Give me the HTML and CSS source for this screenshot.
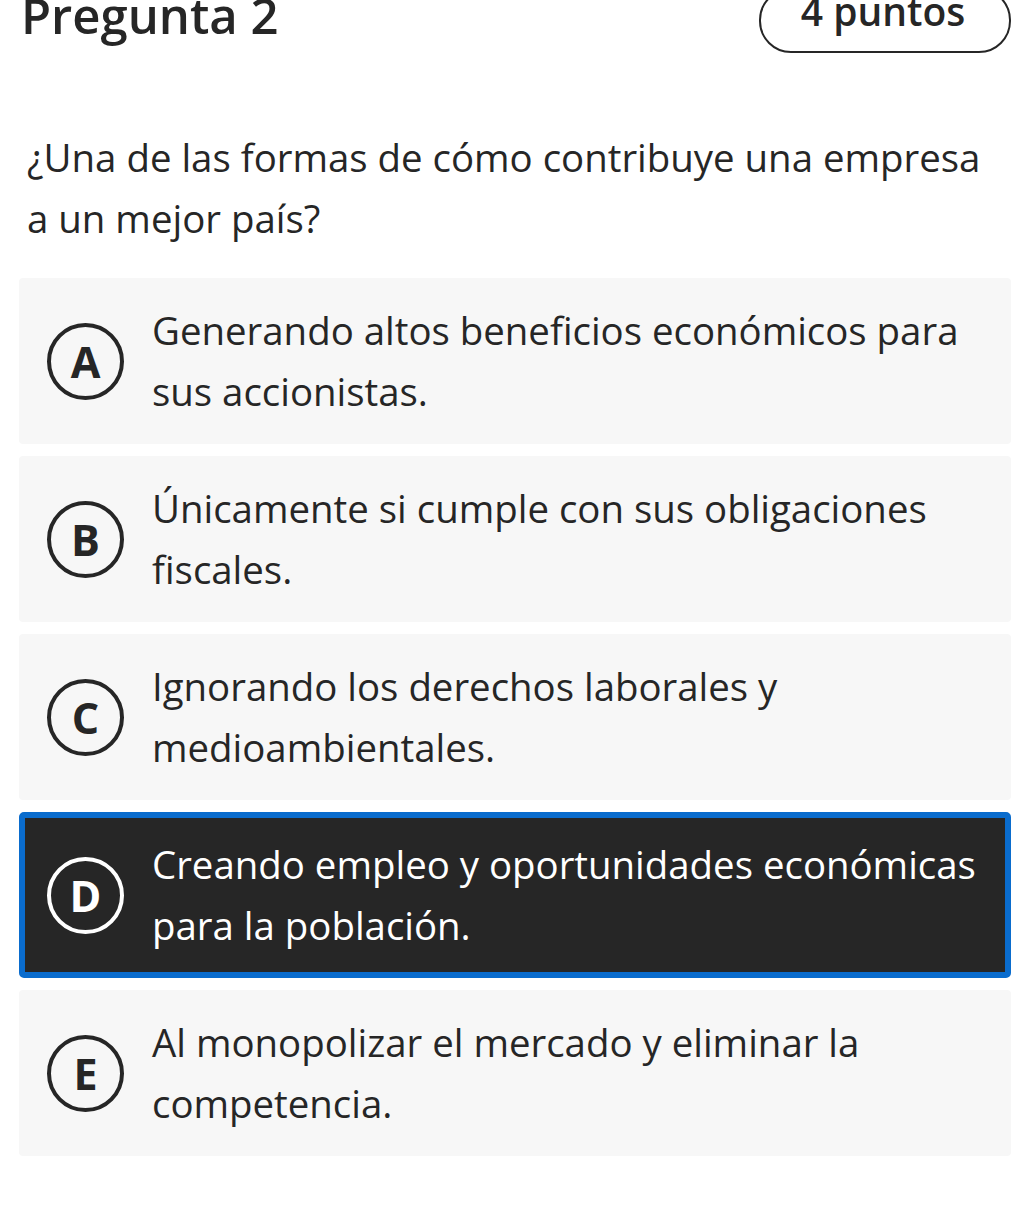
FILE: index.html
```html
<!DOCTYPE html>
<html lang="es">
<head>
<meta charset="utf-8">
<title>Pregunta 2</title>
<link rel="stylesheet" href="styles.css">
</head>
<body>
<main class="page">
  <header class="head">
    <h1 class="title">Pregunta 2</h1>
    <span class="points">4 puntos</span>
  </header>
  <p class="question">¿Una de las formas de cómo contribuye una empresa a un mejor país?</p>
  <ul class="options">
    <li class="option"><span class="badge">A</span><span class="text">Generando altos beneficios económicos para sus accionistas.</span></li>
    <li class="option"><span class="badge">B</span><span class="text">Únicamente si cumple con sus obligaciones fiscales.</span></li>
    <li class="option"><span class="badge">C</span><span class="text">Ignorando los derechos laborales y medioambientales.</span></li>
    <li class="option selected"><span class="badge">D</span><span class="text">Creando empleo y oportunidades económicas para la población.</span></li>
    <li class="option"><span class="badge">E</span><span class="text">Al monopolizar el mercado y eliminar la competencia.</span></li>
  </ul>
</main>
</body>
</html>
```

FILE: styles.css
```css
html, body {
  margin: 0;
  padding: 0;
  background: #ffffff;
}
body {
  font-family: "Open Sans", "Noto Sans", sans-serif;
  color: #262626;
}
.page {
  padding: 0 5px 0 19px;
}
.head {
  display: flex;
  justify-content: space-between;
  align-items: flex-start;
  margin-top: -12px;
}
.title {
  margin: -3px 0 0 0;
  padding-left: 2px;
  font-size: 49px;
  font-weight: 600;
  line-height: 60px;
}
.points {
  display: block;
  box-sizing: border-box;
  width: 252px;
  height: 65px;
  border: 2px solid #262626;
  border-radius: 32px;
  text-align: center;
  font-size: 39px;
  font-weight: 600;
  line-height: 42px;
  padding-right: 4px;
}
.question {
  margin: 74px 0 0 0;
  padding-left: 8px;
  font-size: 38.4px;
  line-height: 61px;
}
.options {
  list-style: none;
  margin: 29px 0 0 0;
  padding: 0;
  display: flex;
  flex-direction: column;
  gap: 12px;
}
.option {
  box-sizing: border-box;
  height: 166px;
  display: flex;
  align-items: center;
  background: #f7f7f7;
  border-radius: 4px;
  padding: 0 20px 0 28px;
}
.badge {
  flex: none;
  box-sizing: border-box;
  width: 77px;
  height: 77px;
  border: 4px solid #262626;
  border-radius: 50%;
  display: flex;
  align-items: center;
  justify-content: center;
  font-size: 43px;
  font-weight: 700;
  line-height: 1;
  margin-right: 28px;
}
.text {
  font-size: 38.4px;
  line-height: 61px;
}
.option.selected {
  background: #262626;
  color: #ffffff;
  border: 6px solid #0a6ccd;
  border-radius: 5px;
  padding-left: 22px;
}
.option.selected .badge {
  border-color: #ffffff;
}
```
